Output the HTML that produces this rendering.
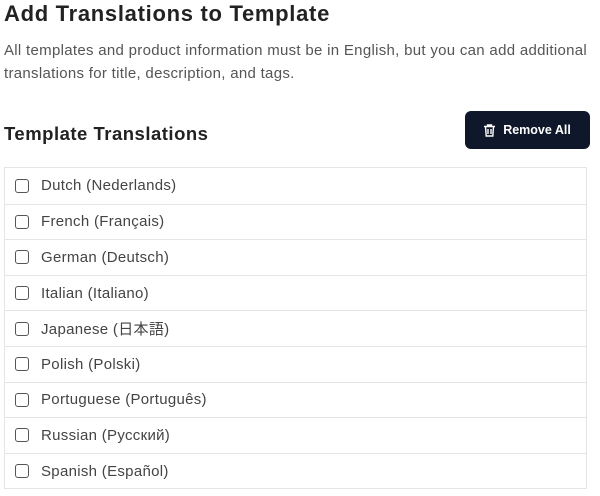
<!DOCTYPE html>
<html><head><meta charset="utf-8"><style>
*{margin:0;padding:0;box-sizing:border-box}
body{width:600px;height:496px;background:#fff;font-family:"Liberation Sans","Noto Sans CJK JP",sans-serif;color:#1f2937;position:relative;overflow:hidden}
h1{position:absolute;left:4px;top:1px;font-size:22px;font-weight:bold;color:#222;letter-spacing:0.7px}
p{position:absolute;left:4px;top:39px;width:600px;font-size:15px;line-height:23px;color:#555;letter-spacing:0.3px}
h2{position:absolute;left:4px;top:123px;font-size:18.5px;font-weight:bold;color:#222;letter-spacing:0.5px}
.btn{position:absolute;left:465px;top:111px;width:125px;height:38px;background:#0f172a;border-radius:6px;color:#fff;font-size:12.5px;font-weight:bold;display:flex;align-items:center;justify-content:center;gap:8px}
.list{position:absolute;left:4px;top:167px;width:583px;border:1px solid #e3e5e8}
.row{height:35.6px;border-top:1px solid #e3e5e8;display:flex;align-items:center;padding-left:10px;font-size:15px;color:#444;letter-spacing:0.3px}
.row:first-child{border-top:none}
.cb{width:14px;height:14px;border:1.3px solid #555;border-radius:3px;margin-right:12px}
</style></head><body>
<h1>Add Translations to Template</h1>
<p>All templates and product information must be in English, but you can add additional translations for title, description, and tags.</p>
<h2>Template Translations</h2>
<div class="btn"><svg width="11" height="13" viewBox="0 0 11 13"><path d="M0 2.5h11M3.5 2.5V1h4v1.5M1.5 2.5l.7 9.5h6.6l.7-9.5M4 5v5M7 5v5" stroke="#fff" stroke-width="1.4" fill="none"/></svg>Remove All</div>
<div class="list">
<div class="row"><span class="cb"></span>Dutch (Nederlands)</div>
<div class="row"><span class="cb"></span>French (Français)</div>
<div class="row"><span class="cb"></span>German (Deutsch)</div>
<div class="row"><span class="cb"></span>Italian (Italiano)</div>
<div class="row"><span class="cb"></span>Japanese (日本語)</div>
<div class="row"><span class="cb"></span>Polish (Polski)</div>
<div class="row"><span class="cb"></span>Portuguese (Português)</div>
<div class="row"><span class="cb"></span>Russian (Русский)</div>
<div class="row"><span class="cb"></span>Spanish (Español)</div>
</div>
</body></html>
